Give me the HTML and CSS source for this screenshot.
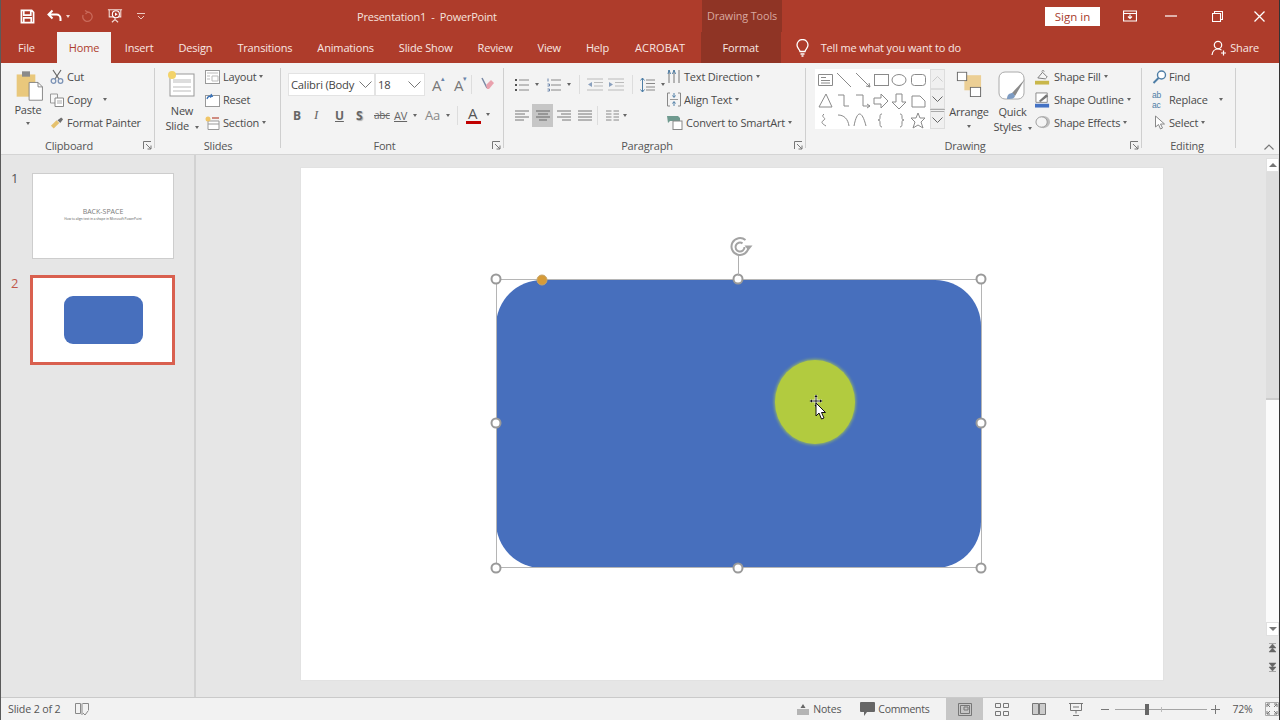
FILE: index.html
```html
<!DOCTYPE html>
<html lang="en">
<head>
<meta charset="utf-8">
<title>Presentation1 - PowerPoint</title>
<link rel="stylesheet" href="styles.css">
</head>
<body>
<div class="app">
  <header class="titlebar">
    <div class="qat">
      <svg class="qi" width="15" height="15" viewBox="0 0 16 16"><path d="M1.500 1.500h11l2 2v11h-13zM4 1.500v5h7.500v-5M4 14.500V9.500h8v5" fill="none" stroke="#fff" stroke-width="1.800"/></svg>
      <svg class="qi q2" width="16" height="14" viewBox="0 0 16 14"><path d="M5.500 1.500 1.500 5.500l4 4M2 5.500h7.500a4 4 0 0 1 4 4v2.500" fill="none" stroke="#fff" stroke-width="2"/></svg>
      <span class="caret q2c"></span>
      <svg class="qi q3" width="13" height="13" viewBox="0 0 13 13"><path d="M6.500 2a4.700 4.700 0 1 1-4.400 3M6.500 2 4 .5M6.500 2 4.500 4" fill="none" stroke="#c8695a" stroke-width="1.300"/></svg>
      <svg class="qi q4" width="16" height="18" viewBox="0 0 18 18"><path d="M1 2h16M2.500 2v8h13V2M9 10v3M5.500 16 9 13l3.500 3" fill="none" stroke="#f3ded9" stroke-width="1.200"/><circle cx="10" cy="7" r="4" fill="#ae3c2b" stroke="#fff" stroke-width="1.200"/><path d="M9 5l3 2-3 2z" fill="#fff"/></svg>
      <svg class="qi q5" width="8" height="7" viewBox="0 0 8 7"><path d="M0 .5h8M1 3l3 3 3-3" fill="none" stroke="#edc8c0"/></svg>
    </div>
    <div class="doc-title">Presentation1&nbsp; -&nbsp; PowerPoint</div>
    <div class="ctx-title">Drawing Tools</div>
    <button class="signin">Sign in</button>
    <div class="winctl">
      <svg width="14" height="12" viewBox="0 0 14 12"><path d="M.5 1h13v10H.5zM.5 3.500h13M7 4.500v4M5 6.500l2 2 2-2" fill="none" stroke="#fff" stroke-width="1.200"/></svg>
      <svg width="12" height="2" viewBox="0 0 12 2"><path d="M0 1h12" stroke="#fff" stroke-width="1.200"/></svg>
      <svg width="11" height="11" viewBox="0 0 11 11"><path d="M.5 2.500h8v8h-8zM2.500 2.500v-2h8v8h-2" fill="none" stroke="#fff" stroke-width="1.100"/></svg>
      <svg width="11" height="11" viewBox="0 0 11 11"><path d="M.5.500l10 10M10.500.500l-10 10" stroke="#fff" stroke-width="1.300"/></svg>
    </div>
  </header>

  <nav class="tabs">
    <span class="tab file">File</span>
    <span class="tab active">Home</span>
    <span class="tab">Insert</span>
    <span class="tab">Design</span>
    <span class="tab">Transitions</span>
    <span class="tab">Animations</span>
    <span class="tab">Slide Show</span>
    <span class="tab">Review</span>
    <span class="tab">View</span>
    <span class="tab">Help</span>
    <span class="tab acro">ACROBAT</span>
    <span class="tab format">Format</span>
    <svg class="bulb" width="13" height="18" viewBox="0 0 13 18"><path d="M4 12.500C3.500 10 1 9 1 6a5.500 5.500 0 0 1 11 0c0 3-2.500 4-3 6.500zM4.500 15h4M5.500 17h2" fill="none" stroke="#fff" stroke-width="1.300"/></svg>
    <span class="tellme">Tell me what you want to do</span>
    <span class="share">
      <svg width="16" height="16" viewBox="0 0 16 16"><circle cx="7" cy="5" r="3.700" fill="none" stroke="#fff" stroke-width="1.200"/><path d="M1 15c.5-4 3-6 6-6 1.500 0 2.500.5 3.500 1M10 13h5M12.500 10.500v5" fill="none" stroke="#fff" stroke-width="1.200"/></svg>
      Share
    </span>
  </nav>

  <section class="ribbon">
    <div class="group g-clip">
      <div class="gbody">
        <div class="bigbtn paste">
          <svg width="30" height="32" viewBox="0 0 32 36"><rect x="1" y="5" width="21" height="25" fill="#e9c87c"/><rect x="7" y="1.500" width="9" height="6" fill="#8a8a8a"/><path d="M15 14h10l5 5v15H15z" fill="#fff" stroke="#7d7d7d"/><path d="M25 14v5h5" fill="none" stroke="#7d7d7d"/></svg>
          <span>Paste</span>
          <span class="caret dark"></span>
        </div>
        <div class="stack clip-stack">
          <div class="row"><svg width="14" height="15" viewBox="0 0 14 15"><path d="M3 1l6 9M11 1 5 10" stroke="#666" stroke-width="1.200"/><circle cx="3.500" cy="12" r="2.300" fill="none" stroke="#7c93b6" stroke-width="1.300"/><circle cx="10.500" cy="12" r="2.300" fill="none" stroke="#7c93b6" stroke-width="1.300"/></svg><span>Cut</span></div>
          <div class="row"><svg width="14" height="14" viewBox="0 0 14 14"><path d="M.5 1h7v9h-7z" fill="#f7f7f7" stroke="#999"/><path d="M5 5h8.500v8.500H5z" fill="#fff" stroke="#888"/><path d="M7 8h5M7 10h5" stroke="#aaa"/></svg><span>Copy</span><span class="caret dark gap8"></span></div>
          <div class="row"><svg width="14" height="14" viewBox="0 0 15 14"><path d="M1 10l6-6 3 3-6 6z" fill="#e5c16e"/><path d="M8 4l4-3 2 2-3 4z" fill="#6f6f6f"/></svg><span>Format Painter</span></div>
        </div>
      </div>
      <div class="glabel pr18">Clipboard<svg class="launch" width="9" height="9" viewBox="0 0 9 9"><path d="M.5 8V.5H8M3 3l5 5M8 4.500V8H4.500" fill="none" stroke="#777"/></svg></div>
    </div>

    <div class="group g-slides">
      <div class="gbody">
        <div class="bigbtn newslide">
          <svg width="28" height="28" viewBox="0 0 28 28"><rect x="3" y="4" width="24" height="22" fill="#fff" stroke="#999"/><rect x="6" y="9" width="18" height="4" fill="#ddd"/><path d="M6 17h18M6 21h18" stroke="#bbb"/><circle cx="5" cy="5" r="4" fill="#f3d36a"/></svg>
          <span>New</span>
          <span>Slide <i class="caret dark"></i></span>
        </div>
        <div class="stack slides-stack">
          <div class="row"><svg width="15" height="14" viewBox="0 0 15 14"><rect x=".5" y=".5" width="14" height="13" fill="#fff" stroke="#999"/><path d="M2 3h11M2 6h3M2 9h3M7 6h6v5H7z" fill="none" stroke="#bbb"/></svg><span>Layout</span><span class="caret dark"></span></div>
          <div class="row"><svg width="15" height="14" viewBox="0 0 15 14"><rect x=".5" y="2.500" width="14" height="11" fill="#fff" stroke="#999"/><path d="M2 6a4 4 0 0 1 5-3l-1-2M7 3 5 4.500" fill="none" stroke="#3a73b8" stroke-width="1.300"/></svg><span>Reset</span></div>
          <div class="row"><svg width="15" height="14" viewBox="0 0 15 14"><path d="M3 5h11v8.500H3zM3 8h11" fill="#fff" stroke="#999"/><circle cx="3" cy="3" r="2.500" fill="#f0c566"/><path d="M7 2h7" stroke="#c36a5b" stroke-width="1.500"/></svg><span>Section</span><span class="caret dark"></span></div>
        </div>
      </div>
      <div class="glabel">Slides</div>
    </div>

    <div class="group g-font">
      <div class="gbody col">
        <div class="font-top">
          <span class="combo c-name"><span>Calibri (Body</span><svg width="13" height="7" viewBox="0 0 13 7"><path d="M.5.500 6.500 6.500l6-6" fill="none" stroke="#777"/></svg></span>
          <span class="combo c-size"><span>18</span><svg width="13" height="7" viewBox="0 0 13 7"><path d="M.5.500 6.500 6.500l6-6" fill="none" stroke="#777"/></svg></span>
          <span class="ficon f-grow">A<sup>▴</sup></span>
          <span class="ficon f-shrink">A<sup>▾</sup></span>
          <span class="sep s-clear"></span>
          <svg class="clear" width="15" height="15" viewBox="0 0 15 15"><path d="M2 1l5 10" stroke="#7b8aa5" stroke-width="1.500"/><path d="M6 8l5-5 3 3-5 6H7z" fill="#e9a1ad"/></svg>
        </div>
        <div class="font-bottom">
          <b class="fb">B</b>
          <i class="fi">I</i>
          <u class="fu">U</u>
          <span class="fs">S</span>
          <s class="fabc">abc</s>
          <span class="fav">AV<i class="caret dark"></i></span>
          <span class="faa">Aa<i class="caret dark"></i></span>
          <span class="sep s-col"></span>
          <span class="fcolor">A<i class="caret dark"></i></span>
        </div>
      </div>
      <div class="glabel pr16">Font<svg class="launch" width="9" height="9" viewBox="0 0 9 9"><path d="M.5 8V.5H8M3 3l5 5M8 4.500V8H4.500" fill="none" stroke="#777"/></svg></div>
    </div>

    <div class="group g-para">
      <div class="gbody">
        <div class="para-left">
          <div class="para-row top">
            <svg width="14" height="14" viewBox="0 0 14 14"><path d="M4 2h10M4 7h10M4 12h10" stroke="#888"/><path d="M0 2h2M0 7h2M0 12h2" stroke="#555" stroke-width="2"/></svg><span class="caret dark"></span>
            <svg class="p-num" width="14" height="14" viewBox="0 0 14 14"><path d="M4 2h10M4 7h10M4 12h10" stroke="#888"/><path d="M1 .5v3M.5 6h2v2h-2M.5 11h2v2h-2" stroke="#6a84aa" fill="none"/></svg><span class="caret dark"></span>
            <span class="sep"></span>
            <svg width="16" height="13" viewBox="0 0 16 13"><path d="M0 1h16M7 4.500h9M7 8h9M0 12h16" stroke="#bbb"/><path d="M5 4 1 6.500 5 9" fill="#8aa0be"/></svg>
            <svg width="16" height="13" viewBox="0 0 16 13"><path d="M0 1h16M7 4.500h9M7 8h9M0 12h16" stroke="#bbb"/><path d="M1 4l4 2.500L1 9" fill="#8aa0be"/></svg>
            <span class="sep"></span>
            <svg width="15" height="16" viewBox="0 0 15 16"><path d="M6 3h9M6 6.500h9M6 10h9M6 13h9" stroke="#888"/><path d="M2.500 1v14M.5 3.500l2-2.500 2 2.500M.5 12.500l2 2.500 2-2.500" fill="none" stroke="#4e7ea6"/></svg><span class="caret dark"></span>
          </div>
          <div class="para-row bottom">
            <span class="al"><svg width="14" height="11" viewBox="0 0 14 11"><path d="M0 1h14M0 4h10M0 7h14M0 10h9" stroke="#777"/></svg></span>
            <span class="al on"><svg width="14" height="11" viewBox="0 0 14 11"><path d="M0 1h14M2 4h10M0 7h14M3 10h8" stroke="#666"/></svg></span>
            <span class="al"><svg width="14" height="11" viewBox="0 0 14 11"><path d="M0 1h14M4 4h10M0 7h14M5 10h9" stroke="#777"/></svg></span>
            <span class="al"><svg width="14" height="11" viewBox="0 0 14 11"><path d="M0 1h14M0 4h14M0 7h14M0 10h14" stroke="#777"/></svg></span>
            <span class="sep"></span>
            <svg class="cols" width="13" height="11" viewBox="0 0 13 11"><path d="M0 1h5.500M7.500 1H13M0 4h5.500M7.500 4H13M0 7h5.500M7.500 7H13M0 10h5.500M7.500 10H13" stroke="#888"/></svg><span class="caret dark"></span>
          </div>
        </div>
        <div class="stack para-stack">
          <div class="row"><svg width="14" height="15" viewBox="0 0 14 15"><path d="M2 1v13M7 1v13M12 1v13" stroke="#777"/><path d="M3.500 5l-1.500-4-1 4M8.500 5 7 1 5.500 5" fill="none" stroke="#4e7ea6"/></svg><span>Text Direction</span><span class="caret dark"></span></div>
          <div class="row"><svg width="14" height="15" viewBox="0 0 14 15"><path d="M3 1H.5v13H3M11 1h2.500v13H11" fill="none" stroke="#888"/><path d="M3 7.500h8" stroke="#999"/><path d="M7 1v4M5.500 3.500 7 5.500l1.500-2M7 10v4M5.500 11.500 7 9.500l1.500 2" fill="none" stroke="#4e7ea6"/></svg><span>Align Text</span><span class="caret dark"></span></div>
          <div class="row"><svg width="16" height="15" viewBox="0 0 16 15"><path d="M0 1h11l2 2v3H3L1 8z" fill="#6f9a8f"/><rect x="6" y="6" width="9" height="8.500" fill="#fff" stroke="#888"/></svg><span>Convert to SmartArt</span><span class="caret dark"></span></div>
        </div>
      </div>
      <div class="glabel pr16">Paragraph<svg class="launch" width="9" height="9" viewBox="0 0 9 9"><path d="M.5 8V.5H8M3 3l5 5M8 4.500V8H4.500" fill="none" stroke="#777"/></svg></div>
    </div>

    <div class="group g-draw">
      <div class="gbody">
        <div class="gallery">
          <svg width="113" height="60" viewBox="0 0 113 60">
            <g fill="none" stroke="#8a8a8a">
              <path d="M1.500 5.500h14v11h-14zM4 8.500h5M4 11.500h9M4 14h9"/>
              <path d="M20 4l14 14M39 4l14 14M53 18l-4-1M53 18l-1-4"/>
              <rect x="57.500" y="5.500" width="14" height="11"/>
              <ellipse cx="82" cy="11" rx="7" ry="5.500"/>
              <rect x="94.500" y="5.500" width="14" height="11" rx="3"/>
              <path d="M9 25l6 13H2zM21 26h6v11h5M39 26h7v11h7M50 35l3 2-3 2"/>
              <path d="M57 29h7v-4l7 7-7 7v-4h-7zM79 25h6v8h4l-7 7-7-7h4z"/>
              <path d="M95 27h8l5 5v6H95z"/>
              <path d="M7 45c-4 3 3 4 0 6s-3 3 2 6M21 46c6 0 10 4 11 11M37 57c3-16 8-16 12 0"/>
              <path d="M65 45c-2 0-2 1-2 3s0 3-2 3c2 0 2 1 2 3s0 4 2 4M83 45c2 0 2 1 2 3s0 3 2 3c-2 0-2 1-2 3s0 4-2 4"/>
              <path d="M101 44l2 5h5l-4 4 2 6-5-3-5 3 2-6-4-4h5z"/>
            </g>
          </svg>
          <div class="gal-scroll">
            <span class="gs dis"><svg width="11" height="6" viewBox="0 0 11 6"><path d="M.5 5.500l5-5 5 5" fill="none" stroke="#ccc"/></svg></span>
            <span class="gs"><svg width="11" height="6" viewBox="0 0 11 6"><path d="M.5.500l5 5 5-5" fill="none" stroke="#666"/></svg></span>
            <span class="gs more"><svg width="11" height="6" viewBox="0 0 11 6"><path d="M.5.500l5 5 5-5" fill="none" stroke="#666"/></svg></span>
          </div>
        </div>
        <div class="bigbtn arrange">
          <svg width="26" height="26" viewBox="0 0 28 31" preserveAspectRatio="none"><rect x="9" y="5" width="18" height="18" fill="#eccf95"/><rect x="1.500" y="1.500" width="10" height="10" fill="#fff" stroke="#666"/><rect x="15.500" y="19.500" width="11" height="11" fill="#fff" stroke="#666"/></svg>
          <span>Arrange</span>
          <span class="caret dark"></span>
        </div>
        <div class="bigbtn quick">
          <svg width="29" height="30" viewBox="0 0 29 30"><rect x="1" y="1" width="25" height="27" rx="6" fill="#fff" stroke="#aaa"/><path d="M27 8 14 22l3 3z" fill="#8a8a8a"/><path d="M9 28c0-4 2-6 6-6l2 3c-1 3-4 3-8 3z" fill="#7d9bc2"/></svg>
          <span>Quick</span>
          <span>Styles <i class="caret dark"></i></span>
        </div>
        <div class="stack draw-stack">
          <div class="row"><svg width="16" height="16" viewBox="0 0 17 16"><path d="M3 9l5-6 5 5-2 2z" fill="#f5f5f5" stroke="#777"/><path d="M7 2a2 2 0 0 1 3 0" fill="none" stroke="#777"/><rect y="12" width="15" height="4" fill="#c9b74a"/></svg><span>Shape Fill</span><span class="caret dark"></span></div>
          <div class="row"><svg width="16" height="16" viewBox="0 0 17 16"><path d="M1 .5h12v10H1z" fill="#fff" stroke="#888"/><path d="M4 9l8-7 2 2-8 6z" fill="#777"/><rect y="12" width="15" height="4" fill="#4472c4"/></svg><span>Shape Outline</span><span class="caret dark"></span></div>
          <div class="row"><svg width="16" height="15" viewBox="0 0 17 15"><ellipse cx="9" cy="7" rx="7" ry="6.500" fill="#bdbdbd"/><ellipse cx="7" cy="7" rx="6" ry="5.500" fill="#f4f4f4" stroke="#999"/></svg><span>Shape Effects</span><span class="caret dark"></span></div>
        </div>
      </div>
      <div class="glabel pr18">Drawing<svg class="launch" width="9" height="9" viewBox="0 0 9 9"><path d="M.5 8V.5H8M3 3l5 5M8 4.500V8H4.500" fill="none" stroke="#777"/></svg></div>
    </div>

    <div class="group g-edit">
      <div class="gbody">
        <div class="stack edit-stack">
          <div class="row"><svg width="14" height="14" viewBox="0 0 14 14"><circle cx="9" cy="5" r="4" fill="#fff" stroke="#4e7ea6" stroke-width="1.400"/><path d="M6 8l-5 5" stroke="#4e7ea6" stroke-width="2"/></svg><span>Find</span></div>
          <div class="row"><span class="abac">ab<br>ac</span><span>Replace</span><span class="caret dark gap8"></span></div>
          <div class="row"><svg width="14" height="16" viewBox="0 0 14 16"><path d="M3 1v11l3-2.500L8 14l2-1-2-4h4z" fill="#fff" stroke="#888"/></svg><span>Select</span><span class="caret dark"></span></div>
        </div>
      </div>
      <div class="glabel pr4">Editing</div>
    </div>

    <div class="ribbon-end">
      <svg width="10" height="6" viewBox="0 0 10 6"><path d="M.5 5.500 5 1l4.500 4.500" fill="none" stroke="#777" stroke-width="1.200"/></svg>
    </div>
  </section>

  <main class="workspace">
    <aside class="thumbs">
      <div class="thumb-row first">
        <span class="num">1</span>
        <div class="thumb t1">
          <div class="t-title">BACK-SPACE</div>
          <div class="t-sub">How to align text in a shape in Microsoft PowerPoint</div>
        </div>
      </div>
      <div class="thumb-row second">
        <span class="num cur">2</span>
        <div class="thumb t2"><div class="mini-shape"></div></div>
      </div>
    </aside>

    <div class="editor">
      <div class="slide">
        <div class="shape"></div>
        <div class="frame"></div>
        <span class="h nw"></span><span class="h n"></span><span class="h ne"></span>
        <span class="h w"></span><span class="h e"></span>
        <span class="h sw"></span><span class="h s"></span><span class="h se"></span>
        <span class="h adj"></span>
        <span class="rot-line"></span>
        <svg class="rot" width="24" height="24" viewBox="0 0 24 24"><path d="M19.500 12a8.500 8.500 0 1 1-3-7" fill="none" stroke="#a3a3a3" stroke-width="2"/><path d="M15.500 12a4.500 4.500 0 1 1-2-3.700" fill="none" stroke="#a3a3a3" stroke-width="2"/><path d="M15.500 10.500l4 5 4-5z" fill="#a3a3a3"/></svg>
        <div class="spot"></div>
        <svg class="cursor" width="18" height="26" viewBox="0 0 18 26">
          <path d="M7 1v12M1 7h12" stroke="#fff" stroke-width="2.500"/>
          <path d="M7 2v10M2 7h10" stroke="#222" stroke-width="1"/>
          <path d="M7 .5 5.500 3h3zM7 13.500 5.500 11h3zM.5 7 3 5.500v3zM13.500 7 11 5.500v3z" fill="#111"/>
          <path d="M7 9v13l3-3 2.500 6 2.500-1-2.500-5.500h4z" fill="#fff" stroke="#111"/>
        </svg>
      </div>
      <div class="vscroll">
        <span class="sb-btn"><i class="tri up"></i></span>
        <span class="sb-thumb"></span>
        <span class="sb-track"></span>
        <span class="sb-btn"><i class="tri down"></i></span>
        <svg class="page" width="9" height="10" viewBox="0 0 9 10"><path d="M1 .5h7M4.500 1 1 5h7zM4.500 5 1 9h7z" fill="#666" stroke="#666" stroke-width=".5"/></svg>
        <svg class="page" width="9" height="10" viewBox="0 0 9 10"><path d="M1 9.500h7M4.500 9 1 5h7zM4.500 5 1 1h7z" fill="#666" stroke="#666" stroke-width=".5"/></svg>
      </div>
    </div>
  </main>

  <footer class="status">
    <span class="st-slide">Slide 2 of 2</span>
    <svg class="st-book" width="14" height="14" viewBox="0 0 14 14"><path d="M.5 1.500h5v10h-5zM7.500 1.500h6v7M7 13V1.500M8 11l2 2 3-4" fill="none" stroke="#888"/></svg>
    <span class="st-notes"><svg width="12" height="12" viewBox="0 0 12 12"><path d="M0 8h12M0 10h12M0 12h12" stroke="#777" transform="translate(0 -1)"/><path d="M6 1 3.500 5h5z" fill="#666"/></svg>Notes</span>
    <span class="st-comments"><svg width="15" height="14" viewBox="0 0 15 14"><path d="M1 0h13a1 1 0 0 1 1 1v8a1 1 0 0 1-1 1H7l-3 4v-4H1a1 1 0 0 1-1-1V1a1 1 0 0 1 1-1z" fill="#666"/></svg>Comments</span>
    <span class="view on"><svg width="14" height="13" viewBox="0 0 14 13"><path d="M.5.500h13v12H.5zM2.500 2.500v8h9v-8zM6 4h4v3H6z" fill="none" stroke="#777"/></svg></span>
    <span class="view"><svg width="14" height="13" viewBox="0 0 14 13"><path d="M.5.500h5v4h-5zM8.500.500h5v4h-5zM.5 8.500h5v4h-5zM8.500 8.500h5v4h-5z" fill="none" stroke="#777"/></svg></span>
    <span class="view"><svg width="14" height="13" viewBox="0 0 14 13"><path d="M.5.500h6v11h-6zM7.500.500h6v11h-6z" fill="#ccc" stroke="#777"/></svg></span>
    <span class="view"><svg width="14" height="13" viewBox="0 0 14 13"><path d="M0 .5h14M1.500.5v7h11v-7M7 7.500v3M4 12.500h6M4 4h6" fill="none" stroke="#777"/></svg></span>
    <span class="zoomctl">
      <i class="zminus"></i>
      <span class="ztrack"><i class="ztick"></i><i class="zthumb"></i></span>
      <svg width="9" height="9" viewBox="0 0 9 9"><path d="M0 4.500h9M4.500 0v9" stroke="#777"/></svg>
    </span>
    <span class="zpct">72%</span>
    <svg class="fit" width="14" height="14" viewBox="0 0 14 14"><path d="M.5.500h13v13H.5z" fill="#f2f2f2" stroke="#aaa"/><path d="M2 2l3 3M2 5V2h3M12 2 9 5M9 2h3v3M2 12l3-3M2 9v3h3M12 12 9 9M12 9v3H9" fill="none" stroke="#777"/></svg>
  </footer>
</div>
</body>
</html>
```
FILE: styles.css
```css
* { box-sizing: border-box; }
html, body { margin: 0; padding: 0; height: 100%; }
body { overflow: hidden; background: #e6e6e6; }
svg { display: block; flex: none; }

.app {
  width: 1280px; height: 720px;
  display: flex; flex-direction: column;
  font-family: "Open Sans", "Noto Sans", "Liberation Sans", sans-serif;
  font-size: 11px; color: #4a4a4a;
  border-right: 1px solid #333;
  border-left: 1px solid #5a5a5a;
  overflow: hidden;
}

/* Title bar */
.titlebar {
  height: 32px; flex: none;
  background: #ae3c2b; color: #f6e3df;
  display: flex; align-items: center;
}
.qat { display: flex; align-items: center; width: 355px; padding-left: 19px; flex: none; }
.q2 { margin-left: 12px; }
.caret {
  display: inline-block; width: 0; height: 0;
  border-left: 2.5px solid transparent; border-right: 2.5px solid transparent;
  border-top: 3px solid #eed2cc;
  margin-left: 3px; vertical-align: middle;
}
.caret.dark { border-top-color: #666; }
.q3 { margin-left: 11px; }
.q4 { margin-left: 13px; }
.q5 { margin-left: 14px; }
.doc-title { width: 346px; flex: none; font-size: 11px; letter-spacing: -.22px; white-space: nowrap; padding-left: 1px; }
.ctx-title {
  width: 80px; height: 32px; flex: none;
  background: #8f3425; color: #d9a9a0;
  font-size: 10.8px; text-align: center; line-height: 32px;
  letter-spacing: -.1px;
}
.signin {
  margin-left: 263px; width: 55px; height: 19px; padding: 0; border: 0;
  background: #fff; color: #a83d2e; font: inherit; font-size: 11.5px;
}
.winctl { display: flex; align-items: center; margin-left: 23px; }
.winctl svg:nth-child(2) { margin-left: 28px; }
.winctl svg:nth-child(3) { margin-left: 35px; }
.winctl svg:nth-child(4) { margin-left: 31px; }

/* Tabs */
.tabs {
  height: 31px; flex: none;
  background: #ae3c2b; color: #f8e7e3;
  display: flex; align-items: stretch;
  font-size: 11px; letter-spacing: -.16px;
}
.tab { display: flex; align-items: center; padding: 0 12.5px; }
.tab.file { padding: 0; margin-left: 17px; margin-right: 22px; }
.tab.active { background: #f3f3f3; color: #ae3c2b; padding: 0 12px; margin-right: 1px; }
.tab.acro { letter-spacing: .1px; margin-left: 1px; }
.tab.format { background: #8f3425; width: 80px; margin-left: 3px; justify-content: center; padding: 0; }
.bulb { align-self: center; margin-left: 15px; }
.tellme { align-self: center; margin-left: 12px; }
.share { align-self: center; display: flex; align-items: center; gap: 3px; margin-left: auto; margin-right: 20px; }

/* Ribbon */
.ribbon {
  height: 92px; flex: none;
  background: #f3f3f3;
  display: flex;
  border-bottom: 1px solid #d4d4d4;
  letter-spacing: -.2px;
}
.group { display: flex; flex-direction: column; height: 100%; flex: none; position: relative; }
.group::after {
  content: ""; position: absolute; right: 0; top: 5px; bottom: 6px; width: 1px; background: #cfcfcf;
}
.gbody { height: 76px; display: flex; flex: none; }
.gbody.col { flex-direction: column; }
.glabel {
  flex: 1; display: flex; justify-content: center; align-items: flex-start;
  color: #555; font-size: 11px; position: relative; line-height: 14px;
}
.pr18 { padding-right: 18px; }
.pr16 { padding-right: 16px; }
.pr4 { padding-right: 4px; }
.launch { position: absolute; right: 3px; top: 2px; }
.g-clip { width: 154px; }
.g-slides { width: 126px; }
.g-font { width: 223px; }
.g-para { width: 302px; }
.g-draw { width: 336px; }
.g-edit { width: 94px; }
.ribbon-end { flex: 1; display: flex; justify-content: flex-end; align-items: flex-end; padding: 0 5px 4px 0; }

.bigbtn { display: flex; flex-direction: column; align-items: center; line-height: 15px; color: #4a4a4a; }
.stack { display: flex; flex-direction: column; padding-top: 2px; }
.row { display: flex; align-items: center; height: 23px; white-space: nowrap; }
.row > svg:first-child { margin-right: 3px; }
.row > span:nth-child(2) + .caret { margin-left: 3px; }
.row > span:nth-child(2) + .caret.gap8 { margin-left: 11px; }

.paste { width: 44px; padding-top: 8px; margin-left: 5px; }
.paste svg { margin: -1px 0 0 3px; }
.paste span:last-child { margin: 5px 0 0; }
.clip-stack { margin-left: 0; }

.newslide { width: 46px; margin-left: 4px; padding-top: 7px; }
.newslide svg { margin: 0 0 5px -3px; }
.slides-stack { margin-left: 0; }

.font-top { display: flex; align-items: center; height: 25px; margin: 9px 0 0 7px; }
.combo {
  background: #fff; height: 23px; display: flex; align-items: center; justify-content: space-between;
  border: 1px solid #e3e3e3; padding: 0 2px 0 2px; font-size: 11.2px; color: #444;
}
.c-name { width: 87px; }
.c-size { width: 50px; padding-right: 3px; }
.ficon { font-size: 15px; color: #777; display: inline-flex; }
.ficon sup { font-size: 7px; color: #6a84aa; line-height: 8px; }
.f-grow { margin-left: 7px; width: 22px; }
.f-shrink { width: 17px; }
.sep { width: 1px; height: 19px; background: #ddd; flex: none; }
.clear { margin-left: 8px; }
.font-bottom { display: flex; align-items: center; height: 24px; margin: 6px 0 0 12px; color: #666; font-size: 11px; }
.fb { width: 21px; font-size: 12px; }
.fi { width: 21px; font-family: "Liberation Serif", serif; font-size: 13px; }
.fu { width: 21px; font-weight: 700; font-size: 12px; }
.fs { width: 18px; font-weight: 700; font-size: 12px; text-shadow: 1px 1px 1px #aaa; }
.fabc { width: 20px; font-size: 10px; }
.fav { width: 31px; display: flex; align-items: center; text-decoration: underline; font-size: 11px; }
.fav .caret { margin-left: 6px; }
.faa { width: 32px; display: flex; align-items: center; font-size: 13px; color: #888; }
.faa .caret { margin-left: 6px; }
.s-col { margin-right: 8px; }
.fcolor {
  display: flex; align-items: flex-start; font-size: 15px; line-height: 15px; color: #555;
  position: relative; width: 26px; height: 18px; padding-left: 2px;
}
.fcolor::after { content: ""; position: absolute; left: 0; bottom: 0; width: 15px; height: 3px; background: #c00000; }
.fcolor .caret { margin: 7px 0 0 9px; }

.para-left { width: 161px; padding-left: 11px; }
.para-row { display: flex; align-items: center; }
.para-row.top { height: 25px; margin-top: 9px; }
.para-row.bottom { height: 23px; margin: 7px 0 0 -4px; }
.para-row.top .caret { margin-left: 6px; }
.p-num { margin-left: 8px; }
.para-row.top .sep { margin: 0 7px 0 8px; }
.para-row.top .sep + svg + svg { margin-left: 5px; }
.al { width: 21px; height: 23px; display: flex; align-items: center; justify-content: center; }
.al.on { background: #c6c6c6; }
.para-row.bottom .sep { margin: 0 8px 0 2px; }
.cols + .caret { margin-left: 4px; }
.para-stack { margin-left: 2px; }

.g-draw .gbody { padding-left: 9px; }
.gallery {
  width: 130px; height: 60px; margin-top: 6px; background: #fff; display: flex; justify-content: space-between;
  padding-left: 2px;
}
.gal-scroll { width: 16px; display: flex; flex-direction: column; }
.gs { height: 20px; flex: none; background: #f0f0f0; border: 1px solid #ddd; display: flex; align-items: center; justify-content: center; }
.gs.more { border-top: 3px double #aaa; }
.arrange { width: 40px; margin-left: 4px; padding-top: 8px; }
.arrange svg { margin-bottom: 7px; }
.arrange .caret { margin: 6px 0 0; }
.quick { width: 45px; margin-left: 1px; padding-top: 8px; }
.quick svg { margin-bottom: 3px; }
.draw-stack { margin-left: 0; }

.edit-stack { margin-left: 10px; }
.edit-stack .row > :first-child { width: 15px; margin-right: 2px; }
.abac { font-family: "Liberation Sans", sans-serif; font-size: 8.500px; line-height: 10px; color: #4e7ea6; }

/* Workspace */
.workspace { flex: 1; min-height: 0; display: flex; }
.thumbs {
  width: 195px; flex: none; background: #e6e6e6;
  border-right: 2px solid #d2d2d2;
  padding-top: 18px;
}
.thumb-row { display: flex; }
.num { width: 30px; padding-left: 10px; font-size: 13px; line-height: 14px; color: #555; }
.first .num { margin-top: -2px; }
.num.cur { color: #c0574a; }
.thumb { background: #fff; }
.t1 {
  width: 142px; height: 86px; margin-left: 1px; border: 1px solid #cdcdcd;
  display: flex; flex-direction: column; align-items: center; justify-content: center;
  padding-bottom: 3px;
}
.t-title { font-size: 7px; color: #7a7a7a; line-height: 9px; letter-spacing: 0; }
.t-sub { font-size: 3.2px; color: #555; line-height: 6px; white-space: nowrap; letter-spacing: 0; }
.second { margin-top: 16px; }
.second .num { padding-top: 1px; }
.t2 {
  width: 145px; height: 90px; margin-left: -1px; border: 3px solid #d9604f;
  display: flex; align-items: center; justify-content: center;
}
.mini-shape { width: 79px; height: 48px; border-radius: 9px; background: #476fbd; margin: -1px 0 0 2px; }

.editor { flex: 1; min-width: 0; display: flex; position: relative; }
.slide {
  width: 864px; height: 514px; flex: none;
  margin: 12px 0 0 104px;
  background: #fff; box-shadow: inset 0 0 0 1px #e2e2e2;
  position: relative;
}
.shape {
  position: absolute; left: 196px; top: 113px; width: 485px; height: 288px;
  background: #476fbd; border-radius: 46px;
}
.frame { position: absolute; left: 196px; top: 112px; width: 486px; height: 289px; border: 1px solid #b5b5b5; }
.h {
  position: absolute; width: 11px; height: 11px; border-radius: 50%;
  background: #fff; border: 2px solid #9a9a9a; transform: translate(-50%, -50%);
}
.nw { left: 196px; top: 112px; } .n { left: 438px; top: 112px; } .ne { left: 681px; top: 112px; }
.w { left: 196px; top: 256px; } .e { left: 681px; top: 256px; }
.sw { left: 196px; top: 401px; } .s { left: 438px; top: 401px; } .se { left: 681px; top: 401px; }
.adj { left: 242px; top: 113px; background: #d69b38; border: 1px solid #c6a56a; }
.rot-line { position: absolute; left: 438px; top: 89px; width: 1px; height: 20px; background: #b0b0b0; }
.rot { position: absolute; left: 429px; top: 68px; }
.spot {
  position: absolute; left: 475px; top: 193px; width: 80px; height: 84px; border-radius: 50%;
  background: #b2cb3f; box-shadow: 0 0 3px 1px #8fb070;
}
.cursor { position: absolute; left: 509px; top: 227px; }

.vscroll {
  position: absolute; right: 0; top: 3px; bottom: 4px; width: 13px;
  display: flex; flex-direction: column; align-items: center;
}
.sb-btn { height: 14px; width: 13px; flex: none; background: #fff; border: 1px solid #e0e0e0; display: flex; align-items: center; justify-content: center; }
.tri { width: 0; height: 0; border-left: 4px solid transparent; border-right: 4px solid transparent; }
.tri.up { border-bottom: 4px solid #777; }
.tri.down { border-top: 4px solid #777; }
.sb-thumb { height: 226px; width: 13px; flex: none; background: #dedede; }
.sb-track { flex: 1; width: 13px; background: #fbfbfb; border-top: 2px solid #ccc; }
.page { margin-top: 7px; flex: none; }
.page + .page { margin-top: 9px; margin-bottom: 21px; }

/* Status bar */
.status {
  height: 23px; flex: none;
  background: #f2f2f2; border-top: 1px solid #cacaca;
  display: flex; align-items: center; letter-spacing: -.15px; font-size: 10.5px; color: #555;
}
.st-slide { margin-left: 7px; width: 70px; font-size: 10.7px; }
.st-notes { display: flex; align-items: center; gap: 4px; margin-left: 708px; }
.st-comments { display: flex; align-items: center; gap: 3px; margin-left: 19px; letter-spacing: -.3px; }
.view { width: 37px; height: 23px; display: flex; align-items: center; justify-content: center; flex: none; }
.view.on { background: #c6c6c6; margin-left: 17px; }
.zoomctl { display: flex; align-items: center; margin-left: 7px; }
.zminus { width: 8px; height: 1px; background: #777; }
.ztrack { width: 92px; height: 1px; margin: 0 4px 0 6px; background: #a5a5a5; position: relative; }
.ztick { position: absolute; left: 46px; top: -2px; width: 1px; height: 5px; background: #bbb; }
.zthumb { position: absolute; left: 30px; top: -5px; width: 4px; height: 11px; background: #666; }
.zpct { margin-left: 12px; width: 34px; }
```
